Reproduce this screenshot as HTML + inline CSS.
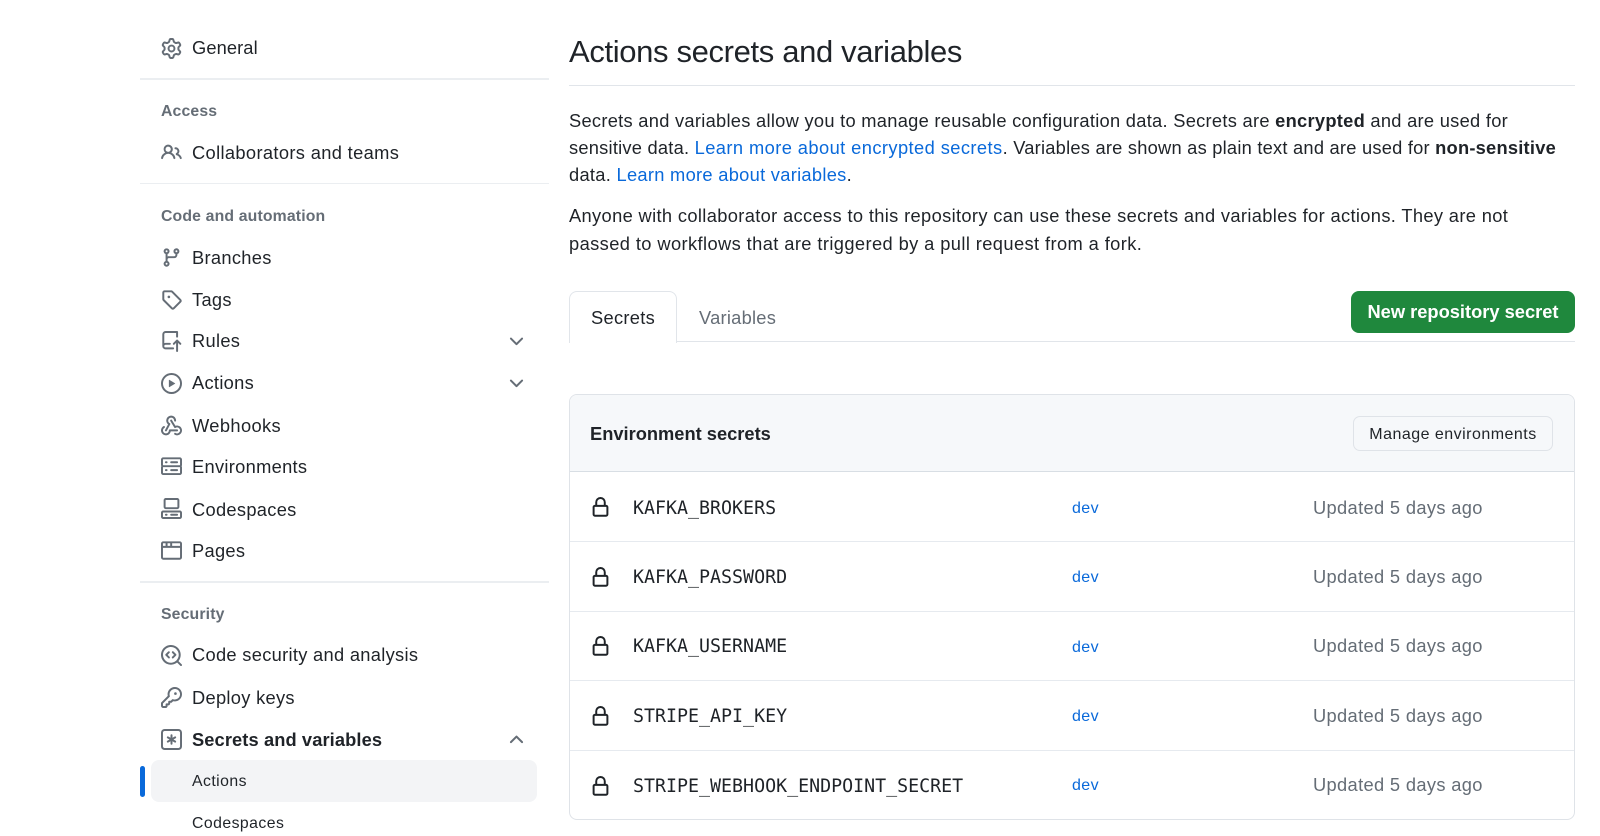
<!DOCTYPE html>
<html lang="en"><head><meta charset="utf-8"><title>Actions secrets and variables</title>
<style>
html,body{margin:0;padding:0;background:#fff}
body{position:relative;width:1600px;height:832px;overflow:hidden;font-family:"Liberation Sans",Arial,sans-serif;font-size:18.3px;color:#1f2328}
.t,svg,.r{position:absolute}
.t{white-space:nowrap;line-height:24px;height:24px;letter-spacing:.3px}
svg{width:21px;height:21px;fill:#656d76}
.h{font-weight:700;font-size:15.8px;color:#656d76;letter-spacing:.15px}
.r{background:#e1e5ea}
a{color:#0969da;text-decoration:none}
b{font-weight:700}
.m{font-family:"DejaVu Sans Mono","Liberation Mono",monospace;left:633px;letter-spacing:0}
.d{left:1072px;font-size:16px;color:#0969da;letter-spacing:.4px}
.u{left:1313px;color:#656d76;letter-spacing:.34px}
.l{left:590px;fill:#1f2328}
.s{left:192px}
.x{font-size:15.8px;letter-spacing:.45px}
</style></head><body>

<svg style="left:161px;top:38px" viewBox="0 0 16 16"><path d="M8 0a8.2 8.2 0 0 1 .701.031C9.444.095 9.99.645 10.16 1.29l.288 1.107c.018.066.079.158.212.224.231.114.454.243.668.386.123.082.233.09.299.071l1.103-.303c.644-.176 1.392.021 1.82.63.27.385.506.792.704 1.218.315.675.111 1.422-.364 1.891l-.814.806c-.049.048-.098.147-.088.294.016.257.016.515 0 .772-.01.147.038.246.088.294l.814.806c.475.469.679 1.216.364 1.891a7.977 7.977 0 0 1-.704 1.217c-.428.61-1.176.807-1.82.63l-1.102-.302c-.067-.019-.177-.011-.3.071a5.909 5.909 0 0 1-.668.386c-.133.066-.194.158-.211.224l-.29 1.106c-.168.646-.715 1.196-1.458 1.26a8.006 8.006 0 0 1-1.402 0c-.743-.064-1.289-.614-1.458-1.26l-.289-1.106c-.018-.066-.079-.158-.212-.224a5.738 5.738 0 0 1-.668-.386c-.123-.082-.233-.09-.299-.071l-1.103.303c-.644.176-1.392-.021-1.82-.63a8.12 8.12 0 0 1-.704-1.218c-.315-.675-.111-1.422.363-1.891l.815-.806c.05-.048.098-.147.088-.294a6.214 6.214 0 0 1 0-.772c.01-.147-.038-.246-.088-.294l-.815-.806C.635 6.045.431 5.298.746 4.623a7.92 7.92 0 0 1 .704-1.217c.428-.61 1.176-.807 1.82-.63l1.102.302c.067.019.177.011.3-.071.214-.143.437-.272.668-.386.133-.066.194-.158.211-.224l.29-1.106C6.009.645 6.556.095 7.299.03 7.53.01 7.764 0 8 0Zm-.571 1.525c-.036.003-.108.036-.137.146l-.289 1.105c-.147.561-.549.967-.998 1.189-.173.086-.34.183-.5.29-.417.278-.97.423-1.529.27l-1.103-.303c-.109-.03-.175.016-.195.045-.22.312-.412.644-.573.99-.014.031-.021.11.059.19l.815.806c.411.406.562.957.53 1.456a4.709 4.709 0 0 0 0 .582c.032.499-.119 1.05-.53 1.456l-.815.806c-.081.08-.073.159-.059.19.162.346.353.677.573.989.02.03.085.076.195.046l1.102-.303c.56-.153 1.113-.008 1.53.27.161.107.328.204.501.29.447.222.85.629.997 1.189l.289 1.105c.029.109.101.143.137.146a6.6 6.6 0 0 0 1.142 0c.036-.003.108-.036.137-.146l.289-1.105c.147-.561.549-.967.998-1.189.173-.086.34-.183.5-.29.417-.278.97-.423 1.529-.27l1.103.303c.109.029.175-.016.195-.045.22-.313.411-.644.573-.99.014-.031.021-.11-.059-.19l-.815-.806c-.411-.406-.562-.957-.53-1.456a4.709 4.709 0 0 0 0-.582c-.032-.499.119-1.05.53-1.456l.815-.806c.081-.08.073-.159.059-.19a6.464 6.464 0 0 0-.573-.989c-.02-.03-.085-.076-.195-.046l-1.102.303c-.56.153-1.113.008-1.53-.27a4.44 4.44 0 0 0-.501-.29c-.447-.222-.85-.629-.997-1.189l-.289-1.105c-.029-.11-.101-.143-.137-.146a6.6 6.6 0 0 0-1.142 0ZM11 8a3 3 0 1 1-6 0 3 3 0 0 1 6 0ZM9.5 8a1.5 1.5 0 1 0-3.001.001A1.5 1.5 0 0 0 9.5 8Z"/></svg>
<div class="t s" style="top:36px;letter-spacing:.1px">General</div>
<div class="r" style="left:140px;top:78px;width:409px;height:2px;background:#ebeef1"></div>

<div class="t h" style="left:161px;top:100px">Access</div>
<svg style="left:161px;top:142px" viewBox="0 0 16 16"><path d="M2 5.5a3.5 3.5 0 1 1 5.898 2.549 5.508 5.508 0 0 1 3.034 4.084.75.75 0 1 1-1.482.235 4 4 0 0 0-7.9 0 .75.75 0 0 1-1.482-.236A5.507 5.507 0 0 1 3.102 8.05 3.493 3.493 0 0 1 2 5.5ZM11 4a3.001 3.001 0 0 1 2.22 5.018 5.01 5.01 0 0 1 2.56 3.012.749.749 0 0 1-.885.954.752.752 0 0 1-.549-.514 3.507 3.507 0 0 0-2.522-2.372.75.75 0 0 1-.574-.73v-.352a.75.75 0 0 1 .416-.672A1.5 1.5 0 0 0 11 5.5.75.75 0 0 1 11 4Zm-5.5-.5a2 2 0 1 0-.001 3.999A2 2 0 0 0 5.5 3.5Z"/></svg>
<div class="t s" style="top:141px;letter-spacing:.35px">Collaborators and teams</div>
<div class="r" style="left:140px;top:183px;width:409px;height:1px;background:#ebeef1"></div>

<div class="t h" style="left:161px;top:205px">Code and automation</div>
<svg style="left:161px;top:247px" viewBox="0 0 16 16"><path d="M9.5 3.25a2.25 2.25 0 1 1 3 2.122V6A2.5 2.5 0 0 1 10 8.5H6a1 1 0 0 0-1 1v1.128a2.251 2.251 0 1 1-1.5 0V5.372a2.25 2.25 0 1 1 1.5 0v1.836A2.493 2.493 0 0 1 6 7h4a1 1 0 0 0 1-1v-.628A2.25 2.25 0 0 1 9.5 3.25Zm-6 0a.75.75 0 1 0 1.5 0 .75.75 0 0 0-1.5 0Zm8.25-.75a.75.75 0 1 0 0 1.5.75.75 0 0 0 0-1.5ZM4.25 12a.75.75 0 1 0 0 1.5.75.75 0 0 0 0-1.5Z"/></svg>
<div class="t s" style="top:246px">Branches</div>
<svg style="left:161px;top:289px" viewBox="0 0 16 16"><path d="M1 7.775V2.75C1 1.784 1.784 1 2.75 1h5.025c.464 0 .91.184 1.238.513l6.25 6.25a1.75 1.75 0 0 1 0 2.474l-5.026 5.026a1.75 1.75 0 0 1-2.474 0l-6.25-6.25A1.752 1.752 0 0 1 1 7.775Zm1.5 0c0 .066.026.13.073.177l6.25 6.25a.25.25 0 0 0 .354 0l5.025-5.025a.25.25 0 0 0 0-.354l-6.25-6.25a.25.25 0 0 0-.177-.073H2.75a.25.25 0 0 0-.25.25ZM6 5a1 1 0 1 1 0 2 1 1 0 0 1 0-2Z"/></svg>
<div class="t s" style="top:288px">Tags</div>
<svg style="left:161px;top:331px" viewBox="0 0 16 16"><path d="M1 2.5A2.5 2.5 0 0 1 3.5 0h8.75a.75.75 0 0 1 .75.75v3.5a.75.75 0 0 1-1.5 0V1.5h-8a1 1 0 0 0-1 1v6.708A2.493 2.493 0 0 1 3.5 9h3.25a.75.75 0 0 1 0 1.5H3.5a1 1 0 0 0 0 2h5.75a.75.75 0 0 1 0 1.5H3.5A2.5 2.5 0 0 1 1 11.5Zm13.23 7.79h-.001l-1.224-1.224v6.184a.75.75 0 0 1-1.5 0V9.066L10.28 10.29a.75.75 0 0 1-1.06-1.061l2.505-2.504a.75.75 0 0 1 1.06 0L15.29 9.23a.751.751 0 0 1-.018 1.042.751.751 0 0 1-1.042.018Z"/></svg>
<div class="t s" style="top:329px">Rules</div>
<svg style="left:506px;top:331px" viewBox="0 0 16 16"><path d="M12.78 5.22a.749.749 0 0 1 0 1.06l-4.25 4.25a.749.749 0 0 1-1.06 0L3.22 6.28a.749.749 0 1 1 1.06-1.06L8 8.939l3.72-3.719a.749.749 0 0 1 1.06 0Z"/></svg>
<svg style="left:161px;top:373px" viewBox="0 0 16 16"><path d="M8 0a8 8 0 1 1 0 16A8 8 0 0 1 8 0ZM1.5 8a6.5 6.5 0 1 0 13 0 6.5 6.5 0 0 0-13 0Zm4.879-2.773 4.264 2.559a.25.25 0 0 1 0 .428l-4.264 2.559A.25.25 0 0 1 6 10.559V5.442a.25.25 0 0 1 .379-.215Z"/></svg>
<div class="t s" style="top:371px">Actions</div>
<svg style="left:506px;top:373px" viewBox="0 0 16 16"><path d="M12.78 5.22a.749.749 0 0 1 0 1.06l-4.25 4.25a.749.749 0 0 1-1.06 0L3.22 6.28a.749.749 0 1 1 1.06-1.06L8 8.939l3.72-3.719a.749.749 0 0 1 1.06 0Z"/></svg>
<svg style="left:161px;top:415px" viewBox="0 0 16 16"><path d="M5.5 4.25a2.25 2.25 0 0 1 4.5 0 .75.75 0 0 0 1.5 0 3.75 3.75 0 1 0-6.14 2.889l-2.272 4.258a.75.75 0 0 0 1.324.706L7 7.25a.75.75 0 0 0-.309-1.015A2.25 2.25 0 0 1 5.5 4.25Z"/><path d="M7.364 3.607a.75.75 0 0 1 1.03.257l2.608 4.349a3.75 3.75 0 1 1-.628 6.785.75.75 0 0 1 .752-1.299 2.25 2.25 0 1 0-.033-3.88.75.75 0 0 1-1.03-.256L7.107 4.636a.75.75 0 0 1 .257-1.03Z"/><path d="M2.9 8.776A.75.75 0 0 1 2.625 9.8 2.25 2.25 0 1 0 6 11.75a.75.75 0 0 1 .75-.751h5.5a.75.75 0 0 1 0 1.5H7.425a3.751 3.751 0 1 1-5.55-3.998.75.75 0 0 1 1.024.274Z"/></svg>
<div class="t s" style="top:414px;letter-spacing:.38px">Webhooks</div>
<svg style="left:161px;top:456px" viewBox="0 0 16 16"><path d="M1.75 1h12.5c.966 0 1.75.784 1.75 1.75v4c0 .372-.116.717-.314 1 .198.283.314.628.314 1v4a1.75 1.75 0 0 1-1.75 1.75H1.75A1.75 1.75 0 0 1 0 12.75v-4c0-.372.116-.717.314-1a1.739 1.739 0 0 1-.314-1v-4C0 1.784.784 1 1.75 1ZM1.5 2.75v4c0 .138.112.25.25.25h12.5a.25.25 0 0 0 .25-.25v-4a.25.25 0 0 0-.25-.25H1.75a.25.25 0 0 0-.25.25Zm.25 5.75a.25.25 0 0 0-.25.25v4c0 .138.112.25.25.25h12.5a.25.25 0 0 0 .25-.25v-4a.25.25 0 0 0-.25-.25ZM7 4.75A.75.75 0 0 1 7.75 4h4.5a.75.75 0 0 1 0 1.5h-4.5A.75.75 0 0 1 7 4.75ZM7.75 10h4.5a.75.75 0 0 1 0 1.5h-4.5a.75.75 0 0 1 0-1.5ZM3 4.75A.75.75 0 0 1 3.75 4h.5a.75.75 0 0 1 0 1.5h-.5A.75.75 0 0 1 3 4.75ZM3.75 10h.5a.75.75 0 0 1 0 1.5h-.5a.75.75 0 0 1 0-1.5Z"/></svg>
<div class="t s" style="top:455px">Environments</div>
<svg style="left:161px;top:498px" viewBox="0 0 16 16"><path d="M0 11.25c0-.966.784-1.75 1.75-1.75h12.5c.966 0 1.75.784 1.75 1.75v3A1.75 1.75 0 0 1 14.25 16H1.75A1.75 1.75 0 0 1 0 14.25Zm2-9.5C2 .784 2.784 0 3.75 0h8.5C13.216 0 14 .784 14 1.75v5a1.75 1.75 0 0 1-1.75 1.75h-8.5A1.75 1.75 0 0 1 2 6.75Zm1.75-.25a.25.25 0 0 0-.25.25v5c0 .138.112.25.25.25h8.5a.25.25 0 0 0 .25-.25v-5a.25.25 0 0 0-.25-.25Zm-2 9.5a.25.25 0 0 0-.25.25v3c0 .138.112.25.25.25h12.5a.25.25 0 0 0 .25-.25v-3a.25.25 0 0 0-.25-.25Z"/><path d="M7 12.75a.75.75 0 0 1 .75-.75h4.5a.75.75 0 0 1 0 1.5h-4.5a.75.75 0 0 1-.75-.75Zm-4 0a.75.75 0 0 1 .75-.75h.5a.75.75 0 0 1 0 1.5h-.5a.75.75 0 0 1-.75-.75Z"/></svg>
<div class="t s" style="top:497.5px">Codespaces</div>
<svg style="left:161px;top:540px" viewBox="0 0 16 16"><path d="M0 2.75C0 1.784.784 1 1.75 1h12.5c.966 0 1.75.784 1.75 1.75v10.5A1.75 1.75 0 0 1 14.25 15H1.75A1.75 1.75 0 0 1 0 13.25ZM14.5 6h-13v7.25c0 .138.112.25.25.25h12.5a.25.25 0 0 0 .25-.25Zm-6-3.5v2h6v-1.75a.25.25 0 0 0-.25-.25ZM5 2.5v2h2v-2Zm-3.25 0a.25.25 0 0 0-.25.25V4.5h2v-2Z"/></svg>
<div class="t s" style="top:539px">Pages</div>
<div class="r" style="left:140px;top:581px;width:409px;height:2px;background:#ebeef1"></div>

<div class="t h" style="left:161px;top:603px">Security</div>
<svg style="left:161px;top:645px" viewBox="0 0 16 16"><path d="M8.47 4.97a.75.75 0 0 0 0 1.06L9.94 7.5 8.47 8.97a.75.75 0 1 0 1.06 1.06l2-2a.75.75 0 0 0 0-1.06l-2-2a.75.75 0 0 0-1.06 0ZM6.53 6.03a.75.75 0 0 0-1.06-1.06l-2 2a.75.75 0 0 0 0 1.06l2 2a.75.75 0 1 0 1.06-1.06L5.06 7.5l1.47-1.47Z"/><path d="M12.246 13.307a7.501 7.501 0 1 1 1.06-1.06l2.474 2.473a.749.749 0 0 1-.326 1.275.749.749 0 0 1-.734-.215ZM1.5 7.5a6.002 6.002 0 0 0 3.608 5.504 6.002 6.002 0 0 0 6.486-1.117.748.748 0 0 1 .292-.293A6 6 0 1 0 1.5 7.5Z"/></svg>
<div class="t s" style="top:643px">Code security and analysis</div>
<svg style="left:161px;top:687px" viewBox="0 0 16 16"><path d="M10.5 0a5.499 5.499 0 1 1-1.288 10.848l-.932.932a.749.749 0 0 1-.53.22H7v.75a.749.749 0 0 1-.22.53l-.5.5a.749.749 0 0 1-.53.22H5v.75a.749.749 0 0 1-.22.53l-.5.5a.749.749 0 0 1-.53.22h-2A1.75 1.75 0 0 1 0 14.25v-2c0-.199.079-.389.22-.53l4.932-4.932A5.5 5.5 0 0 1 10.5 0Zm-4 5.5c-.001.431.069.86.205 1.269a.75.75 0 0 1-.181.768L1.5 12.56v1.69c0 .138.112.25.25.25h1.69l.06-.06v-1.19a.75.75 0 0 1 .75-.75h1.19l.06-.06v-1.19a.75.75 0 0 1 .75-.75h1.19l1.023-1.025a.75.75 0 0 1 .768-.18A4 4 0 1 0 6.5 5.5ZM11 6a1 1 0 1 1 0-2 1 1 0 0 1 0 2Z"/></svg>
<div class="t s" style="top:686px">Deploy keys</div>
<svg style="left:161px;top:729px" viewBox="0 0 16 16"><path d="M0 2.75A2.75 2.75 0 0 1 2.75 0h10.5A2.75 2.75 0 0 1 16 2.75v10.5A2.75 2.75 0 0 1 13.25 16H2.75A2.75 2.75 0 0 1 0 13.25ZM2.75 1.5c-.69 0-1.25.56-1.25 1.25v10.5c0 .69.56 1.25 1.25 1.25h10.5c.69 0 1.25-.56 1.25-1.25V2.75c0-.69-.56-1.25-1.25-1.25Z"/><path d="M8 4a.75.75 0 0 1 .75.75V6.7l1.69-.975a.75.75 0 0 1 .75 1.3L9.5 8l1.69.976a.75.75 0 0 1-.75 1.298L8.75 9.3v1.951a.75.75 0 0 1-1.5 0V9.299l-1.69.976a.75.75 0 0 1-.75-1.3L6.5 8l-1.69-.975a.75.75 0 0 1 .75-1.3l1.69.976V4.75A.75.75 0 0 1 8 4Z"/></svg>
<div class="t s" style="top:728px;font-weight:700;letter-spacing:.1px">Secrets and variables</div>
<svg style="left:506px;top:729px" viewBox="0 0 16 16"><path d="M3.22 10.53a.749.749 0 0 1 0-1.06l4.25-4.25a.749.749 0 0 1 1.06 0l4.25 4.25a.749.749 0 1 1-1.06 1.06L8 6.811 4.28 10.53a.749.749 0 0 1-1.06 0Z"/></svg>
<div class="r" style="left:151px;top:760px;width:386px;height:42px;border-radius:8px;background:#f3f4f6"></div>
<div class="r" style="left:140px;top:766px;width:5px;height:31px;border-radius:3px;background:#0969da"></div>
<div class="t s x" style="top:770px">Actions</div>
<div class="t s x" style="top:812px">Codespaces</div>

<div class="t" style="left:569px;top:32px;font-size:31px;line-height:40px;height:40px;letter-spacing:-.35px">Actions secrets and variables</div>
<div class="r" style="left:569px;top:85px;width:1006px;height:1px"></div>
<div class="t" style="left:569px;top:109px;letter-spacing:.28px">Secrets and variables allow you to manage reusable configuration data. Secrets are <b>encrypted</b> and are used for</div>
<div class="t" style="left:569px;top:136px;letter-spacing:.23px">sensitive data. <a style="letter-spacing:.42px">Learn more about encrypted secrets</a>. Variables are shown as plain text and are used for <b>non-sensitive</b></div>
<div class="t" style="left:569px;top:163px;letter-spacing:.29px">data. <a>Learn more about variables</a>.</div>
<div class="t" style="left:569px;top:204px;letter-spacing:.35px">Anyone with collaborator access to this repository can use these secrets and variables for actions. They are not</div>
<div class="t" style="left:569px;top:232px;letter-spacing:.4px">passed to workflows that are triggered by a pull request from a fork.</div>

<div class="r" style="left:569px;top:341px;width:1006px;height:1px"></div>
<div class="r" style="left:569px;top:291px;width:106px;height:51px;background:#fff;border:1px solid #e1e5ea;border-bottom:0;border-radius:8px 8px 0 0"></div>
<div class="t" style="left:591px;top:306px">Secrets</div>
<div class="t" style="left:699px;top:306px;color:#656d76;letter-spacing:.25px">Variables</div>
<div class="r" style="left:1351px;top:291px;width:224px;height:42px;border-radius:8px;background:#1f883d"></div>
<div class="t" style="left:1351px;top:300px;width:224px;text-align:center;color:#fff;font-weight:700;letter-spacing:0">New repository secret</div>

<div class="r" style="left:569px;top:394px;width:1006px;height:426px;box-sizing:border-box;background:#fff;border:1px solid #dfe3e8;border-radius:8px"></div>
<div class="r" style="left:570px;top:395px;width:1004px;height:76px;background:#f6f8fa;border-radius:7px 7px 0 0;border-bottom:1px solid #d8dee4"></div>
<div class="t" style="left:590px;top:422px;font-weight:700;letter-spacing:0">Environment secrets</div>
<div class="r" style="left:1353px;top:416px;width:200px;height:35px;box-sizing:border-box;background:#f6f8fa;border:1px solid #dfe3e8;border-radius:7px"></div>
<div class="t" style="left:1353px;top:423px;width:200px;text-align:center;font-size:16px;letter-spacing:.48px">Manage environments</div>

<div class="r" style="left:570px;top:541px;width:1004px;height:1px;background:#e6eaef"></div>
<div class="r" style="left:570px;top:611px;width:1004px;height:1px;background:#e6eaef"></div>
<div class="r" style="left:570px;top:680px;width:1004px;height:1px;background:#e6eaef"></div>
<div class="r" style="left:570px;top:750px;width:1004px;height:1px;background:#e6eaef"></div>

<svg class="l" style="top:496.5px" viewBox="0 0 16 16"><path d="M4 4a4 4 0 0 1 8 0v2h.25c.966 0 1.75.784 1.75 1.75v5.5A1.75 1.75 0 0 1 12.25 15h-8.5A1.75 1.75 0 0 1 2 13.25v-5.5C2 6.784 2.784 6 3.75 6H4Zm8.25 3.5h-8.5a.25.25 0 0 0-.25.25v5.5c0 .138.112.25.25.25h8.5a.25.25 0 0 0 .25-.25v-5.5a.25.25 0 0 0-.25-.25ZM10.5 6V4a2.5 2.5 0 1 0-5 0v2Z"/></svg>
<div class="t m" style="top:497px">KAFKA_BROKERS</div>
<div class="t d" style="top:497px">dev</div>
<div class="t u" style="top:496px">Updated 5 days ago</div>

<svg class="l" style="top:566.5px" viewBox="0 0 16 16"><path d="M4 4a4 4 0 0 1 8 0v2h.25c.966 0 1.75.784 1.75 1.75v5.5A1.75 1.75 0 0 1 12.25 15h-8.5A1.75 1.75 0 0 1 2 13.25v-5.5C2 6.784 2.784 6 3.75 6H4Zm8.25 3.5h-8.5a.25.25 0 0 0-.25.25v5.5c0 .138.112.25.25.25h8.5a.25.25 0 0 0 .25-.25v-5.5a.25.25 0 0 0-.25-.25ZM10.5 6V4a2.5 2.5 0 1 0-5 0v2Z"/></svg>
<div class="t m" style="top:566px">KAFKA_PASSWORD</div>
<div class="t d" style="top:566px">dev</div>
<div class="t u" style="top:565px">Updated 5 days ago</div>

<svg class="l" style="top:635.5px" viewBox="0 0 16 16"><path d="M4 4a4 4 0 0 1 8 0v2h.25c.966 0 1.75.784 1.75 1.75v5.5A1.75 1.75 0 0 1 12.25 15h-8.5A1.75 1.75 0 0 1 2 13.25v-5.5C2 6.784 2.784 6 3.75 6H4Zm8.25 3.5h-8.5a.25.25 0 0 0-.25.25v5.5c0 .138.112.25.25.25h8.5a.25.25 0 0 0 .25-.25v-5.5a.25.25 0 0 0-.25-.25ZM10.5 6V4a2.5 2.5 0 1 0-5 0v2Z"/></svg>
<div class="t m" style="top:635px">KAFKA_USERNAME</div>
<div class="t d" style="top:636px">dev</div>
<div class="t u" style="top:634px">Updated 5 days ago</div>

<svg class="l" style="top:705.5px" viewBox="0 0 16 16"><path d="M4 4a4 4 0 0 1 8 0v2h.25c.966 0 1.75.784 1.75 1.75v5.5A1.75 1.75 0 0 1 12.25 15h-8.5A1.75 1.75 0 0 1 2 13.25v-5.5C2 6.784 2.784 6 3.75 6H4Zm8.25 3.5h-8.5a.25.25 0 0 0-.25.25v5.5c0 .138.112.25.25.25h8.5a.25.25 0 0 0 .25-.25v-5.5a.25.25 0 0 0-.25-.25ZM10.5 6V4a2.5 2.5 0 1 0-5 0v2Z"/></svg>
<div class="t m" style="top:705px">STRIPE_API_KEY</div>
<div class="t d" style="top:705px">dev</div>
<div class="t u" style="top:704px">Updated 5 days ago</div>

<svg class="l" style="top:775.5px" viewBox="0 0 16 16"><path d="M4 4a4 4 0 0 1 8 0v2h.25c.966 0 1.75.784 1.75 1.75v5.5A1.75 1.75 0 0 1 12.25 15h-8.5A1.75 1.75 0 0 1 2 13.25v-5.5C2 6.784 2.784 6 3.75 6H4Zm8.25 3.5h-8.5a.25.25 0 0 0-.25.25v5.5c0 .138.112.25.25.25h8.5a.25.25 0 0 0 .25-.25v-5.5a.25.25 0 0 0-.25-.25ZM10.5 6V4a2.5 2.5 0 1 0-5 0v2Z"/></svg>
<div class="t m" style="top:775px">STRIPE_WEBHOOK_ENDPOINT_SECRET</div>
<div class="t d" style="top:774px">dev</div>
<div class="t u" style="top:773px">Updated 5 days ago</div>

</body></html>
